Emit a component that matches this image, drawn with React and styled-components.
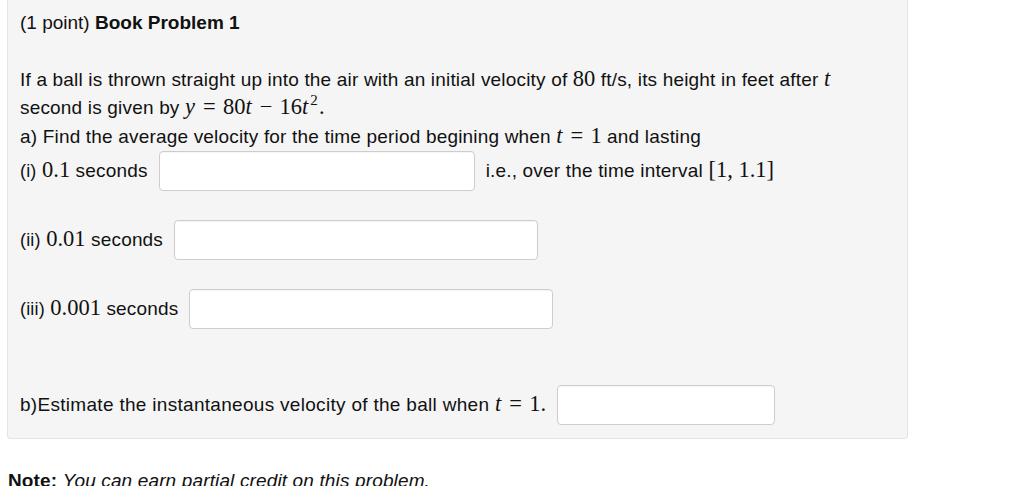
import React from "react";
import styled, { createGlobalStyle } from "styled-components";

const Global = createGlobalStyle`
  html, body { margin: 0; padding: 0; background: #fff; }
  body {
    font-family: "Liberation Sans", Arial, Helvetica, sans-serif;
    font-size: 19px;
    line-height: 28.5px;
    color: #111;
    overflow: hidden;
  }
`;

const Page = styled.div`
  width: 1024px;
  height: 486px;
  overflow: hidden;
`;

const Panel = styled.div`
  box-sizing: border-box;
  width: 901px;
  margin-left: 7px;
  padding: 9px 12px 13px 12px;
  background: #f5f5f5;
  border: 1px solid #e3e3e3;
  border-top: none;
  border-radius: 0 0 4px 4px;
`;

const Header = styled.div`
  height: 28.5px;
`;

const Bold = styled.b`
  font-weight: 700;
`;

const Body = styled.div`
  margin-top: 28px;
  letter-spacing: 0.18px;
`;

const M = styled.span`
  font-family: "Liberation Serif", "Times New Roman", serif;
  font-size: 22.5px;
  line-height: 1;
  letter-spacing: 0;
  font-style: ${(p) => (p.$i ? "italic" : "normal")};
  margin-right: ${(p) => (p.$i ? "1px" : "0")};
`;

const Sup = styled.sup`
  font-family: "Liberation Serif", "Times New Roman", serif;
  font-size: 15px;
  line-height: 0;
  vertical-align: 9px;
  margin-left: 1px;
  margin-right: 1px;
`;

const Op = styled.span`
  font-family: "Liberation Serif", "Times New Roman", serif;
  font-size: 22.5px;
  line-height: 1;
  margin: 0 7px;
`;

const Row = styled.div`
  display: flex;
  align-items: center;
  height: 40px;
  margin-top: ${(p) => p.$mt || 0}px;
  white-space: nowrap;
`;

const Label = styled.span`
  margin-right: 11px;
  letter-spacing: ${(p) => (p.$wide ? "0.3px" : "inherit")};
`;

const Small = styled.span`
  font-size: 18px;
`;

const Answer = styled.input`
  box-sizing: border-box;
  width: ${(p) => p.$w}px;
  height: 40px;
  border: 1px solid #cdcdcd;
  border-radius: 4px;
  background: #fff;
  padding: 4px 8px;
  font: inherit;
  outline: none;
  box-shadow: inset 0 1px 1px rgba(0, 0, 0, 0.04);
`;

const After = styled.span`
  margin-left: 11px;
`;

const Note = styled.div`
  margin-top: 28px;
  margin-left: 8px;
  letter-spacing: 0.14px;
`;

const It = styled.i`
  font-style: italic;
`;

export default function App() {
  return (
    <Page>
      <Global />
      <Panel>
        <Header>
          (1 point) <Bold>Book Problem 1</Bold>
        </Header>
        <Body>
          If a ball is thrown straight up into the air with an initial velocity of <M>80</M> ft/s, its
          height in feet after <M $i>t</M>
          <br />
          second is given by <M $i>y</M>
          <Op>=</Op>
          <M>80</M>
          <M $i>t</M>
          <Op>−</Op>
          <M>16</M>
          <M $i>t</M>
          <Sup>2</Sup>
          <M>.</M>
          <br />
          a) Find the average velocity for the time period begining when <M $i>t</M>
          <Op>=</Op>
          <M>1</M> and lasting
          <Row>
            <Label>
              <Small>(i)</Small> <M>0.1</M> seconds
            </Label>
            <Answer $w={316} />
            <After>
              i.e., over the time interval <M>[1, 1.1]</M>
            </After>
          </Row>
          <Row $mt={29}>
            <Label>
              <Small>(ii)</Small> <M>0.01</M> seconds
            </Label>
            <Answer $w={364} />
          </Row>
          <Row $mt={29}>
            <Label>
              <Small>(iii)</Small> <M>0.001</M> seconds
            </Label>
            <Answer $w={364} />
          </Row>
          <Row $mt={56}>
            <Label $wide>
              b)Estimate the instantaneous velocity of the ball when <M $i>t</M>
              <Op>=</Op>
              <M>1.</M>
            </Label>
            <Answer $w={218} />
          </Row>
        </Body>
      </Panel>
      <Note>
        <Bold>Note:</Bold> <It>You can earn partial credit on this problem.</It>
      </Note>
    </Page>
  );
}
